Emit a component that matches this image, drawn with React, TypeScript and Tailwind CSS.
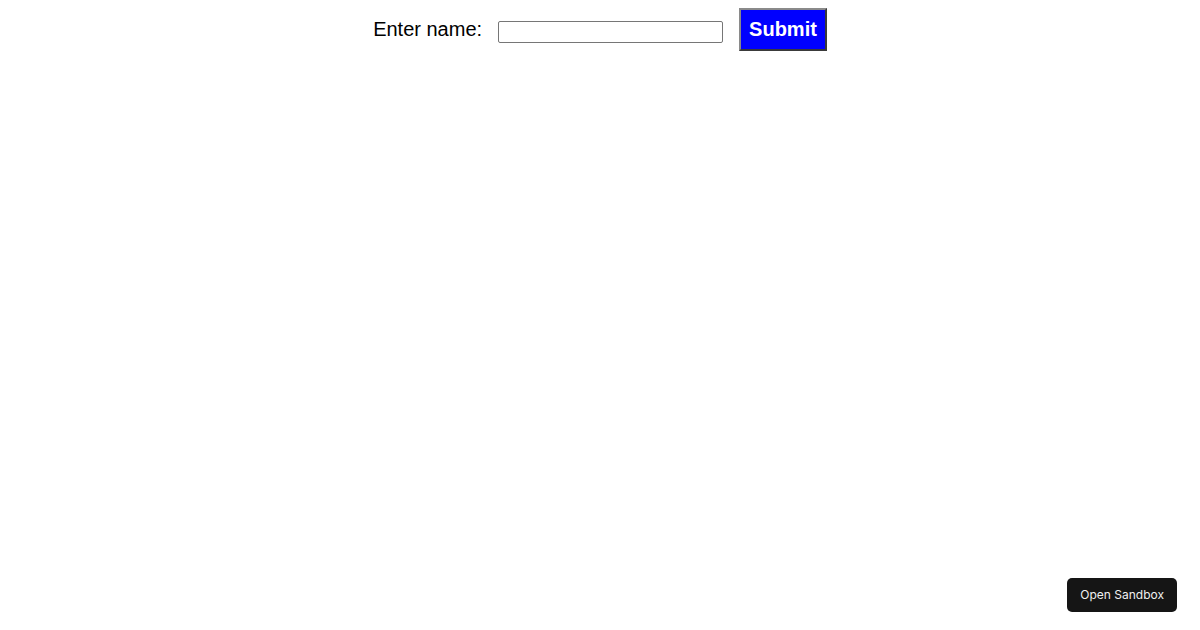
import React, { useState } from "react";

export default function App() {
  const [name, setName] = useState("");

  return (
    <div className="relative min-h-[630px] bg-white font-['Liberation_Sans',Arial,sans-serif] text-black">
      <form
        className="flex justify-center items-baseline gap-4 pt-2"
        onSubmit={(e) => e.preventDefault()}
      >
        <label htmlFor="name" className="text-[20px] leading-[23px]">
          Enter name:
        </label>
        <input
          id="name"
          value={name}
          onChange={(e) => setName(e.target.value)}
          className="w-[225px] h-[22px] px-[2px] text-[13px] border border-[#767676] rounded-[2px] bg-white"
        />
        <button
          type="submit"
          className="bg-[#0000ff] text-white font-bold text-[20px] leading-[23px] px-2 py-2 border-2 border-t-[#8a8a8a] border-l-[#8a8a8a] border-r-[#3a3a3a] border-b-[#3a3a3a]"
        >
          Submit
        </button>
      </form>

      {/* sandbox launcher */}
      <button className="fixed right-[23px] bottom-[18px] h-[34px] px-[13px] rounded-[5px] bg-[#151515] text-[#f0f0f0] text-[12px] font-['Inter',sans-serif]">
        Open Sandbox
      </button>
    </div>
  );
}
